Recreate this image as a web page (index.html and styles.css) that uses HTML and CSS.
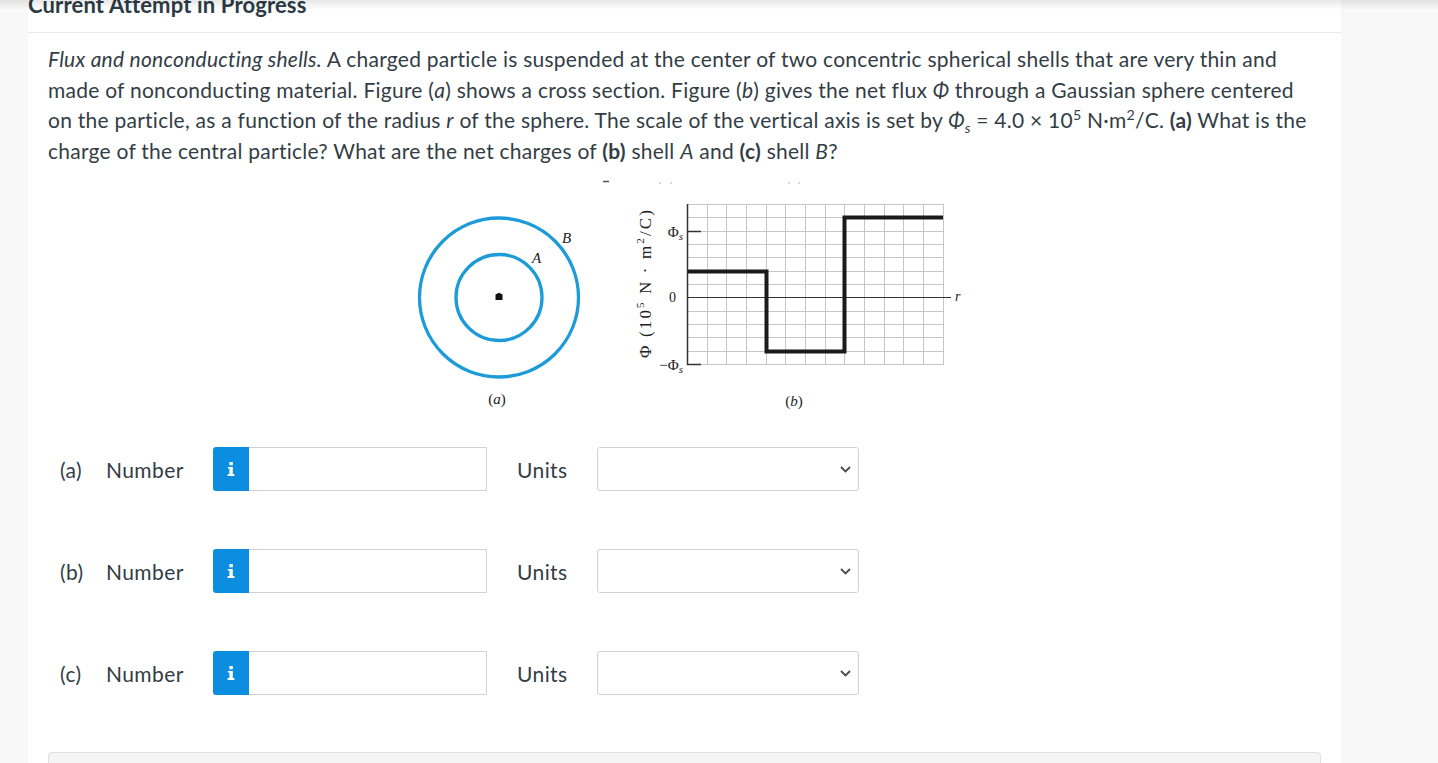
FILE: index.html
```html
<!DOCTYPE html>
<html lang="en">
<head>
<meta charset="utf-8">
<title>Current Attempt in Progress</title>
<link rel="stylesheet" href="styles.css">
</head>
<body>
<div class="sheet">
  <div class="head"><h2 class="title">Current Attempt in Progress</h2></div>
  <div class="content">
    <p class="q"><em>Flux and nonconducting shells.</em> A charged particle is suspended at the center of two concentric spherical shells that are very thin and made of nonconducting material. Figure (<em>a</em>) shows a cross section. Figure (<em>b</em>) gives the net flux <em>Φ</em> through a Gaussian sphere centered on the particle, as a function of the radius <em>r</em> of the sphere. The scale of the vertical axis is set by <em>Φ</em><sub><em>s</em></sub> = 4.0 × 10<sup>5</sup> N·m<sup>2</sup>/C. <b>(a)</b> What is the charge of the central particle? What are the net charges of <b>(b)</b> shell <em>A</em> and <b>(c)</b> shell <em>B</em>?</p>

    <div class="figure">
      <svg class="fig" width="560" height="245" viewBox="0 0 560 245" xmlns="http://www.w3.org/2000/svg">
        <!-- faint scan marks -->
        <line x1="198" y1="9.5" x2="204" y2="9.5" stroke="#555" stroke-width="1.5"/>
        <g fill="#aaa">
          <circle cx="255" cy="11" r="0.8"/><circle cx="266" cy="11" r="0.8"/>
          <circle cx="384" cy="11" r="0.8"/><circle cx="394" cy="11" r="0.8"/>
        </g>
        <!-- figure (a) -->
        <circle cx="94" cy="125.5" r="79.5" fill="none" stroke="#1d9bd8" stroke-width="3.3"/>
        <circle cx="94" cy="125.5" r="43" fill="none" stroke="#1d9bd8" stroke-width="3.3"/>
        <polygon points="90.5,122.5 94,120.8 97.5,122.5 97.5,128 90.5,128" fill="#111"/>
        <text class="ser it" x="127" y="91" font-size="15">A</text>
        <text class="ser it" x="157" y="71" font-size="15">B</text>
        <text class="ser" x="92" y="232" font-size="15" text-anchor="middle">(<tspan font-style="italic">a</tspan>)</text>

        <!-- figure (b) grid -->
        <g stroke="#c6c6c6" stroke-width="1">
          <line x1="302.5" y1="32" x2="302.5" y2="193"/>
          <line x1="321.5" y1="32" x2="321.5" y2="193"/>
          <line x1="341.5" y1="32" x2="341.5" y2="193"/>
          <line x1="361.5" y1="32" x2="361.5" y2="193"/>
          <line x1="380.5" y1="32" x2="380.5" y2="193"/>
          <line x1="400.5" y1="32" x2="400.5" y2="193"/>
          <line x1="420.5" y1="32" x2="420.5" y2="193"/>
          <line x1="439.5" y1="32" x2="439.5" y2="193"/>
          <line x1="459.5" y1="32" x2="459.5" y2="193"/>
          <line x1="479.5" y1="32" x2="479.5" y2="193"/>
          <line x1="498.5" y1="32" x2="498.5" y2="193"/>
          <line x1="518.5" y1="32" x2="518.5" y2="193"/>
          <line x1="538.5" y1="32" x2="538.5" y2="193"/>
          <line x1="282" y1="32.5" x2="539" y2="32.5"/>
          <line x1="282" y1="45.5" x2="539" y2="45.5"/>
          <line x1="282" y1="59.5" x2="539" y2="59.5"/>
          <line x1="282" y1="72.5" x2="539" y2="72.5"/>
          <line x1="282" y1="85.5" x2="539" y2="85.5"/>
          <line x1="282" y1="99.5" x2="539" y2="99.5"/>
          <line x1="282" y1="112.5" x2="539" y2="112.5"/>
          <line x1="282" y1="139.5" x2="539" y2="139.5"/>
          <line x1="282" y1="152.5" x2="539" y2="152.5"/>
          <line x1="282" y1="165.5" x2="539" y2="165.5"/>
          <line x1="282" y1="179.5" x2="539" y2="179.5"/>
          <line x1="282" y1="192.5" x2="539" y2="192.5"/>
        </g>
        <!-- axes -->
        <line x1="282" y1="125.5" x2="546" y2="125.5" stroke="#333" stroke-width="1.2"/>
        <line x1="282.5" y1="32" x2="282.5" y2="193" stroke="#333" stroke-width="1.5"/>
        <line x1="282" y1="59.5" x2="296" y2="59.5" stroke="#333" stroke-width="1.5"/>
        <line x1="282" y1="192.5" x2="296" y2="192.5" stroke="#333" stroke-width="1.5"/>
        <!-- curve -->
        <path d="M283 99.5 H361.5 V179.5 H439.5 V45.5 H538" fill="none" stroke="#1a1a1a" stroke-width="4"/>
        <!-- labels -->
        <text class="ser" x="278" y="65" font-size="15" text-anchor="end">Φ<tspan font-size="11" font-style="italic" dy="3">s</tspan></text>
        <text class="ser" x="271" y="130" font-size="14" text-anchor="end">0</text>
        <text class="ser" x="278" y="198" font-size="15" text-anchor="end">−Φ<tspan font-size="11" font-style="italic" dy="3">s</tspan></text>
        <text class="ser it" x="550" y="129" font-size="14">r</text>
        <text class="ser" transform="translate(246 112) rotate(-90)" font-size="17" text-anchor="middle" textLength="148" lengthAdjust="spacing">Φ (10<tspan font-size="11" dy="-7">5</tspan><tspan dy="7"> N · m</tspan><tspan font-size="11" dy="-7">2</tspan><tspan dy="7">/C)</tspan></text>
        <text class="ser" x="389" y="234" font-size="15" text-anchor="middle">(<tspan font-style="italic">b</tspan>)</text>
      </svg>
    </div>

    <div class="answers">
      <div class="row">
        <span class="part">(a)</span>
        <span class="numlbl">Number</span>
        <div class="igroup">
          <span class="info"><svg width="8" height="14" viewBox="0 0 8 14"><rect x="2.4" y="0" width="3.4" height="3.3" fill="#fff"/><path d="M0.8 5 H5.8 V12 H7.4 V14 H0.6 V12 H2.4 V6.6 H0.8 Z" fill="#fff"/></svg></span>
          <span class="field"></span>
        </div>
        <span class="units">Units</span>
        <div class="select"><svg width="11" height="7" viewBox="0 0 11 7"><path d="M1 1 L5.5 5.5 L10 1" fill="none" stroke="#4a4a4a" stroke-width="1.8"/></svg></div>
      </div>
      <div class="row">
        <span class="part">(b)</span>
        <span class="numlbl">Number</span>
        <div class="igroup">
          <span class="info"><svg width="8" height="14" viewBox="0 0 8 14"><rect x="2.4" y="0" width="3.4" height="3.3" fill="#fff"/><path d="M0.8 5 H5.8 V12 H7.4 V14 H0.6 V12 H2.4 V6.6 H0.8 Z" fill="#fff"/></svg></span>
          <span class="field"></span>
        </div>
        <span class="units">Units</span>
        <div class="select"><svg width="11" height="7" viewBox="0 0 11 7"><path d="M1 1 L5.5 5.5 L10 1" fill="none" stroke="#4a4a4a" stroke-width="1.8"/></svg></div>
      </div>
      <div class="row">
        <span class="part">(c)</span>
        <span class="numlbl">Number</span>
        <div class="igroup">
          <span class="info"><svg width="8" height="14" viewBox="0 0 8 14"><rect x="2.4" y="0" width="3.4" height="3.3" fill="#fff"/><path d="M0.8 5 H5.8 V12 H7.4 V14 H0.6 V12 H2.4 V6.6 H0.8 Z" fill="#fff"/></svg></span>
          <span class="field"></span>
        </div>
        <span class="units">Units</span>
        <div class="select"><svg width="11" height="7" viewBox="0 0 11 7"><path d="M1 1 L5.5 5.5 L10 1" fill="none" stroke="#4a4a4a" stroke-width="1.8"/></svg></div>
      </div>
    </div>

    <div class="bottom-box"></div>
  </div>
</div>
</body>
</html>
```

FILE: styles.css
```css
html, body {
  margin: 0;
  padding: 0;
}
body {
  background: #f8f8f8;
  font-family: Lato, "Noto Sans", sans-serif;
  color: #2d3b45;
  overflow: hidden;
}
body::before {
  content: "";
  position: fixed;
  top: 0;
  left: 0;
  right: 0;
  height: 10px;
  background: linear-gradient(rgba(0, 0, 0, 0.09), rgba(0, 0, 0, 0));
  pointer-events: none;
  z-index: 5;
}
.sheet {
  margin-left: 28px;
  width: 1313px;
  min-height: 763px;
  background: #fff;
}
.head {
  height: 32px;
  border-bottom: 1px solid #e8e8e8;
  overflow: hidden;
}
.title {
  margin: -8px 0 0;
  font-size: 22px;
  font-weight: 700;
  line-height: 26px;
  letter-spacing: 0.15px;
  color: #2d3b45;
}
.content {
  padding: 0 20px;
}
.q {
  margin: 11px 0 0;
  font-size: 21px;
  line-height: 30.5px;
  letter-spacing: 0.25px;
  color: #333d45;
}
.q sup, .q sub {
  font-size: 0.68em;
  line-height: 0;
}
.q b {
  font-weight: 700;
}
.figure {
  display: flex;
  justify-content: center;
  margin-top: 6px;
}
.fig {
  display: block;
}
.ser {
  font-family: "Liberation Serif", "DejaVu Serif", serif;
  fill: #222;
}
.it {
  font-style: italic;
}
.answers {
  margin-top: 30px;
  display: flex;
  flex-direction: column;
  gap: 58px;
}
.row {
  display: flex;
  align-items: center;
  height: 44px;
  padding-left: 12px;
  font-size: 21px;
  letter-spacing: 0.4px;
  color: #333d45;
}
.part {
  width: 46px;
}
.numlbl {
  width: 107px;
}
.igroup {
  display: flex;
  height: 44px;
  width: 274px;
}
.info {
  width: 36px;
  height: 44px;
  background: #0b8ee0;
  border-radius: 3px 0 0 3px;
  display: flex;
  align-items: center;
  justify-content: center;
}
.field {
  flex: 1;
  box-sizing: border-box;
  height: 44px;
  border: 1px solid #d2d2d2;
  border-left: none;
  background: #fff;
}
.units {
  margin-left: 30px;
  width: 80px;
}
.select {
  box-sizing: border-box;
  width: 262px;
  height: 44px;
  border: 1px solid #d2d2d2;
  border-radius: 3px;
  background: #fff;
  display: flex;
  align-items: center;
  justify-content: flex-end;
  padding-right: 7px;
}
.select svg {
  display: block;
}
.bottom-box {
  margin-top: 57px;
  height: 60px;
  border: 1px solid #e0e0e0;
  border-radius: 4px;
  background: #f5f5f5;
}
```
